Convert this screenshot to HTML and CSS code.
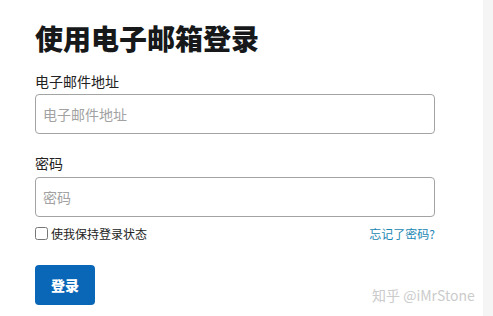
FILE: index.html
```html
<!DOCTYPE html>
<html lang="zh-CN">
<head>
  <meta charset="UTF-8">
  <meta name="viewport" content="width=device-width, initial-scale=1.0">
  <title>使用电子邮箱登录</title>
  <link rel="stylesheet" href="styles.css">
</head>
<body>
  <div class="page">
    <div class="login">
      <h1>使用电子邮箱登录</h1>
      <form class="login-form">
        <label class="field-label" for="email">电子邮件地址</label>
        <input type="email" id="email" class="field" placeholder="电子邮件地址">

        <label class="field-label second" for="password">密码</label>
        <input type="password" id="password" class="field" placeholder="密码">

        <div class="options">
          <label class="remember">
            <input type="checkbox" class="checkbox">
            <span>使我保持登录状态</span>
          </label>
          <a href="#" class="forgot">忘记了密码?</a>
        </div>

        <button type="button" class="submit">登录</button>
      </form>
    </div>
    <div class="side"></div>
  </div>
  <div class="watermark">知乎 @iMrStone</div>
</body>
</html>
```

FILE: styles.css
```css
body {
  margin: 0;
  padding: 0;
  background-color: #fff;
  font-family: "Noto Sans CJK SC", "Noto Sans", sans-serif;
  color: #1e1e1e;
}

.page {
  display: flex;
  height: 316px;
}

.login {
  flex: 1;
  padding: 20px 0 0 35px;
}

.side {
  width: 10px;
  background-color: #f5f5f5;
}

h1 {
  margin: 0;
  font-size: 28px;
  line-height: 36px;
  font-weight: 900;
  color: #16181a;
}

.login-form {
  display: flex;
  flex-direction: column;
  width: 400px;
  margin-top: 15px;
}

.field-label {
  font-size: 14px;
  line-height: 20px;
  color: #222;
  margin-bottom: 3px;
}

.field-label.second {
  margin-top: 19px;
  margin-bottom: 4px;
}

.field {
  box-sizing: border-box;
  height: 40px;
  padding: 0 7px;
  border: 1px solid #a3a3a3;
  border-radius: 4px;
  font-family: inherit;
  font-size: 14px;
  color: #222;
  outline: none;
}

.field::placeholder {
  color: #a2a2a2;
}

.options {
  display: flex;
  justify-content: space-between;
  align-items: center;
  height: 20px;
  margin-top: 6px;
  font-size: 12px;
}

.remember {
  display: flex;
  align-items: center;
  color: #222;
}

.checkbox {
  width: 13px;
  height: 13px;
  margin: 0 3px 0 0;
}

.forgot {
  color: #1b87b3;
  text-decoration: none;
}

.submit {
  align-self: flex-start;
  width: 60px;
  height: 40px;
  margin-top: 22px;
  border: none;
  border-radius: 4px;
  background-color: #0a66b7;
  color: #fff;
  font-family: inherit;
  font-size: 14px;
  font-weight: 900;
  cursor: pointer;
}

.watermark {
  position: absolute;
  left: 372px;
  top: 285px;
  font-size: 14px;
  line-height: 20px;
  color: #cbcbcb;
  white-space: nowrap;
}
```
